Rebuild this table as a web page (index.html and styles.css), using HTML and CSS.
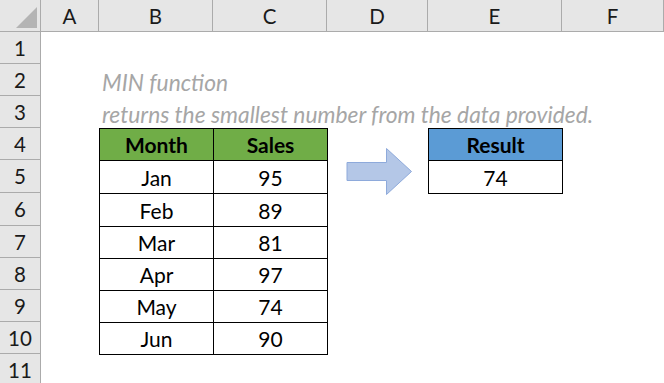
FILE: index.html
```html
<!DOCTYPE html>
<html>
<head>
<meta charset="utf-8">
<link rel="stylesheet" href="styles.css">
</head>
<body>
<div class="sheet">
  <div class="corner"><div class="tri"></div></div>
  <div class="colh">A</div>
  <div class="colh">B</div>
  <div class="colh">C</div>
  <div class="colh">D</div>
  <div class="colh">E</div>
  <div class="colh">F</div>

  <div class="rowh r1">1</div>
  <div class="rowh r2">2</div>
  <div class="rowh r3">3</div>
  <div class="rowh r4">4</div>
  <div class="rowh r5">5</div>
  <div class="rowh r6">6</div>
  <div class="rowh r7">7</div>
  <div class="rowh r8">8</div>
  <div class="rowh r9">9</div>
  <div class="rowh r10">10</div>
  <div class="rowh r11">11</div>

  <div class="note n1">MIN function</div>
  <div class="note n2">returns the smallest number from the data provided.</div>

  <div class="table">
    <div class="th">Month</div><div class="th">Sales</div>
    <div class="td tall">Jan</div><div class="td tall">95</div>
    <div class="td tall">Feb</div><div class="td tall">89</div>
    <div class="td">Mar</div><div class="td">81</div>
    <div class="td">Apr</div><div class="td">97</div>
    <div class="td">May</div><div class="td">74</div>
    <div class="td">Jun</div><div class="td">90</div>
  </div>

  <div class="arrow">
    <svg width="67" height="49" viewBox="0 0 67 49">
      <path d="M1 15.5 H40.5 V1.5 L65.5 24.5 L40.5 47.5 V33.5 H1 Z" fill="#b4c7e7" stroke="#8eaadb" stroke-width="1"/>
    </svg>
  </div>

  <div class="result">
    <div class="rh">Result</div>
    <div class="td tall">74</div>
  </div>
</div>
</body>
</html>
```

FILE: styles.css
```css
html, body {
  margin: 0;
  padding: 0;
  background: #fff;
  overflow: hidden;
}
body {
  width: 664px;
  height: 383px;
  font-family: Lato, "Open Sans", sans-serif;
  color: #000;
}
.sheet {
  display: grid;
  grid-template-columns: 41px 58px 114px 114px 101px 134px 102px;
  grid-template-rows: 32px 32px 32px 32px 32px 33px 33px 32px 32px 32px 32px 32px;
}
.corner {
  grid-row: 1;
  grid-column: 1;
  background: #e6e6e6;
  border-right: 1px solid #ababab;
  border-bottom: 1px solid #ababab;
  box-sizing: border-box;
  position: relative;
}
.tri {
  position: absolute;
  right: 3px;
  bottom: 3px;
  width: 21px;
  height: 21px;
  background: #b4b4b4;
  clip-path: polygon(100% 0, 100% 100%, 0 100%);
}
.colh {
  grid-row: 1;
  background: #e6e6e6;
  border-right: 1px solid #ababab;
  border-bottom: 1px solid #ababab;
  box-sizing: border-box;
  display: flex;
  align-items: center;
  justify-content: center;
  font-size: 20.5px;
  color: #1a1a1a;
  padding-top: 1px;
}
.colh:last-of-type { border-right: none; }
.rowh {
  grid-column: 1;
  background: #e6e6e6;
  border-right: 1px solid #ababab;
  border-bottom: 1px solid #ababab;
  box-sizing: border-box;
  display: flex;
  align-items: center;
  justify-content: center;
  font-size: 20.5px;
  color: #1a1a1a;
}
.r1 { grid-row: 2; }
.r2 { grid-row: 3; }
.r3 { grid-row: 4; }
.r4 { grid-row: 5; }
.r5 { grid-row: 6; }
.r6 { grid-row: 7; }
.r7 { grid-row: 8; }
.r8 { grid-row: 9; }
.r9 { grid-row: 10; }
.r10 { grid-row: 11; }
.r11 { grid-row: 12; }

.note {
  grid-column: 3 / 8;
  font-style: italic;
  font-size: 22.8px;
  color: #a6a6a6;
  padding-left: 3px;
  padding-top: 3px;
  display: flex;
  align-items: center;
  white-space: nowrap;
}
.n1 { grid-row: 3; }
.n2 { grid-row: 4; }

.table {
  grid-column: 3 / 5;
  grid-row: 5 / 12;
  display: grid;
  grid-template-columns: 114px 114px;
  grid-template-rows: 32px 33px 33px 32px 32px 32px 32px;
  width: 229px;
  height: 227px;
  border-top: 1px solid #000;
  border-left: 1px solid #000;
  box-sizing: border-box;
  align-self: start;
}
.th, .td, .rh {
  border-right: 1px solid #000;
  border-bottom: 1px solid #000;
  box-sizing: border-box;
  display: flex;
  align-items: center;
  justify-content: center;
  font-size: 21px;
}
.th {
  background: #70ad47;
  font-weight: 700;
}
.rh {
  background: #5b9bd5;
  font-weight: 700;
  height: 32px;
}
.result .td { height: 33px; }

.result {
  grid-column: 6;
  grid-row: 5 / 7;
  width: 135px;
  border-top: 1px solid #000;
  border-left: 1px solid #000;
  box-sizing: border-box;
  align-self: start;
  display: flex;
  flex-direction: column;
}

.arrow {
  grid-column: 5;
  grid-row: 5 / 7;
  align-self: start;
  margin-top: 19px;
  margin-left: 19px;
  line-height: 0;
}
```
